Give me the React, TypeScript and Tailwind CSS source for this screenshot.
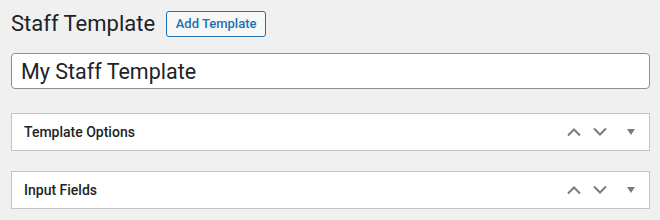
import React from 'react'

const font = { fontFamily: 'Roboto, "Noto Sans", sans-serif' }

function ChevronUp() {
  return (
    <svg width="16" height="10" viewBox="0 0 16 10" fill="none">
      <path d="M2 8.5 L8 2.5 L14 8.5" stroke="#787c82" strokeWidth="2" />
    </svg>
  )
}

function ChevronDown() {
  return (
    <svg width="16" height="10" viewBox="0 0 16 10" fill="none">
      <path d="M2 1.5 L8 7.5 L14 1.5" stroke="#787c82" strokeWidth="2" />
    </svg>
  )
}

function Caret() {
  return (
    <svg width="10" height="6" viewBox="0 0 10 6">
      <path d="M1 0 L9 0 L5 6 Z" fill="#787c82" />
    </svg>
  )
}

function Postbox({ title }: { title: string }) {
  return (
    <div className="flex h-[38px] items-center border border-[#c3c4c7] bg-white">
      <h2 className="flex-1 pl-3 text-[14px] font-medium text-[#1d2327]">{title}</h2>
      <div className="flex h-full items-center">
        <button className="flex h-full w-[26px] items-center justify-center">
          <ChevronUp />
        </button>
        <button className="flex h-full w-[26px] items-center justify-center">
          <ChevronDown />
        </button>
        <button className="flex h-full w-9 items-center justify-center">
          <Caret />
        </button>
      </div>
    </div>
  )
}

export default function App() {
  return (
    <div className="h-[220px] w-[660px] bg-[#f0f0f1] pl-[11px] pr-[10px] pt-[11px]" style={font}>
      {/* Title row */}
      <div className="flex h-[26px] items-center">
        <h1 className="text-[22px] leading-[26px] font-normal text-[#1d2327]">Staff Template</h1>
        <button className="ml-[11px] h-[26px] w-[100px] rounded-[3px] border border-[#2271b1] bg-[#f6f7f7] text-[13px] font-medium text-[#2271b1]">
          Add Template
        </button>
      </div>

      {/* Title input */}
      <input
        className="mt-4 block h-9 w-full rounded-[4px] border border-[#8c8f94] bg-white px-[9px] text-[21.5px] text-[#1d2327] outline-none"
        defaultValue="My Staff Template"
        style={font}
      />

      <div className="mt-6 flex flex-col gap-[20px]">
        <Postbox title="Template Options" />
        <Postbox title="Input Fields" />
      </div>
    </div>
  )
}
